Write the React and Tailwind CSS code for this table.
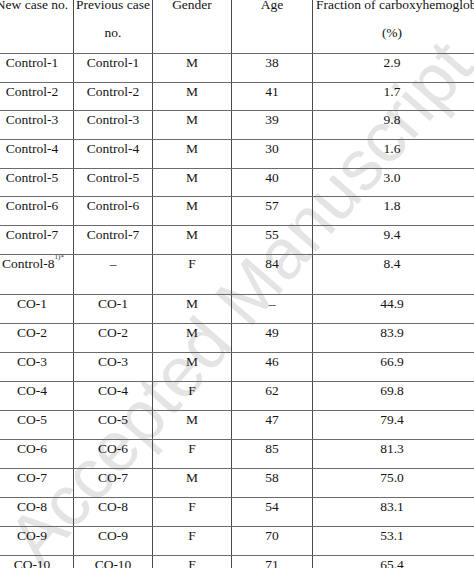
import React from "react";

const controlRows = [
  ["Control-1", "Control-1", "M", "38", "2.9"],
  ["Control-2", "Control-2", "M", "41", "1.7"],
  ["Control-3", "Control-3", "M", "39", "9.8"],
  ["Control-4", "Control-4", "M", "30", "1.6"],
  ["Control-5", "Control-5", "M", "40", "3.0"],
  ["Control-6", "Control-6", "M", "57", "1.8"],
  ["Control-7", "Control-7", "M", "55", "9.4"],
];

const coRows = [
  ["CO-1", "CO-1", "M", "–", "44.9"],
  ["CO-2", "CO-2", "M", "49", "83.9"],
  ["CO-3", "CO-3", "M", "46", "66.9"],
  ["CO-4", "CO-4", "F", "62", "69.8"],
  ["CO-5", "CO-5", "M", "47", "79.4"],
  ["CO-6", "CO-6", "F", "85", "81.3"],
  ["CO-7", "CO-7", "M", "58", "75.0"],
  ["CO-8", "CO-8", "F", "54", "83.1"],
  ["CO-9", "CO-9", "F", "70", "53.1"],
  ["CO-10", "CO-10", "F", "71", "65.4"],
];

const cols = "grid grid-cols-[83px_79px_79px_81px_170px]";

const Row = ({ cells, h }) => (
  <div className={`${cols} border-b border-[#6a6a6a] ${h}`}>
    {cells.map((c, i) => (
      <div
        key={i}
        className={`text-center leading-[16px] pt-px whitespace-nowrap ${i < 4 ? "border-r border-[#4a4a4a]" : "w-[158px]"}`}
      >
        {c}
      </div>
    ))}
  </div>
);

export default function App() {
  return (
    <div className="relative w-[474px] h-[568px] overflow-hidden bg-white">
      {/* watermark */}
      <div className="absolute left-[240px] top-[302px] -translate-x-1/2 -translate-y-1/2 -rotate-[49deg] whitespace-nowrap text-[71px] leading-none text-[#e4e4e4] font-['Liberation_Sans',Arial,sans-serif]">
        Accepted Manuscript
      </div>

      <div className="relative -mt-[9px] -ml-[9px] text-[13.5px] text-[#141414] font-['Liberation_Serif','Times_New_Roman',serif]">
        {/* header */}
        <div className={`${cols} h-[63px] border-b border-[#6a6a6a] leading-[28px]`}>
          <div className="text-center border-r border-[#4a4a4a] whitespace-nowrap">New case no.</div>
          <div className="text-center border-r border-[#4a4a4a] whitespace-nowrap">
            Previous case
            <br />
            no.
          </div>
          <div className="text-center border-r border-[#4a4a4a]">Gender</div>
          <div className="text-center border-r border-[#4a4a4a]">Age</div>
          <div className="w-[158px]">
            <div className="whitespace-nowrap pl-[3px]">Fraction of carboxyhemoglobin</div>
            <div className="text-center">(%)</div>
          </div>
        </div>

        {controlRows.map((r) => (
          <Row key={r[0]} cells={r} h="h-[28.7px]" />
        ))}

        {/* Control-8 */}
        <div className={`${cols} h-[40px] border-b border-[#6a6a6a]`}>
          <div className="text-center leading-[16px] pt-px border-r border-[#4a4a4a] whitespace-nowrap pl-[2px]">
            Control-8<sup className="text-[7px] align-[5px]">1)*</sup>
          </div>
          <div className="text-center leading-[16px] pt-px border-r border-[#4a4a4a]">–</div>
          <div className="text-center leading-[16px] pt-px border-r border-[#4a4a4a]">F</div>
          <div className="text-center leading-[16px] pt-px border-r border-[#4a4a4a]">84</div>
          <div className="text-center leading-[16px] pt-px w-[158px]">8.4</div>
        </div>

        {coRows.map((r) => (
          <Row key={r[0]} cells={r} h="h-[29px]" />
        ))}
      </div>
    </div>
  );
}
